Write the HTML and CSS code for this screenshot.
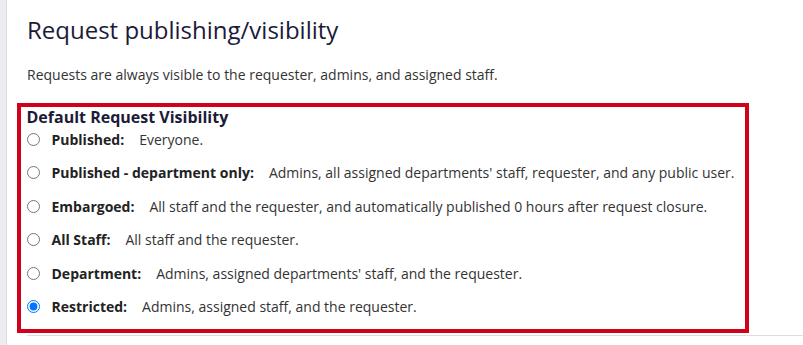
FILE: index.html
```html
<!DOCTYPE html>
<html lang="en">
<head>
  <meta charset="UTF-8" />
  <title>Request publishing/visibility</title>
  <link rel="stylesheet" href="styles.css">
</head>
<body>
  <div class="layout">
    <div class="side-rail"></div>

    <div class="content">
      <h1>Request publishing/visibility</h1>
      <p class="intro">Requests are always visible to the requester, admins, and assigned staff.</p>

      <!-- Default visibility options -->
      <fieldset class="visibility-box">
        <legend>Default Request Visibility</legend>
        <label class="option">
          <input type="radio" name="visibility" value="published" />
          <strong>Published:</strong> <span>Everyone.</span>
        </label>
        <label class="option">
          <input type="radio" name="visibility" value="published_dept" />
          <strong>Published - department only:</strong> <span>Admins, all assigned departments' staff, requester, and any public user.</span>
        </label>
        <label class="option">
          <input type="radio" name="visibility" value="embargoed" />
          <strong>Embargoed:</strong> <span>All staff and the requester, and automatically published 0 hours after request closure.</span>
        </label>
        <label class="option">
          <input type="radio" name="visibility" value="all_staff" />
          <strong>All Staff:</strong> <span>All staff and the requester.</span>
        </label>
        <label class="option">
          <input type="radio" name="visibility" value="department" />
          <strong>Department:</strong> <span>Admins, assigned departments' staff, and the requester.</span>
        </label>
        <label class="option">
          <input type="radio" name="visibility" value="restricted" checked />
          <strong>Restricted:</strong> <span>Admins, assigned staff, and the requester.</span>
        </label>
      </fieldset>

      <div class="divider"></div>
    </div>
  </div>
</body>
</html>
```

FILE: styles.css
```css
body {
  margin: 0;
  font-family: 'Open Sans', 'Liberation Sans', sans-serif;
  color: #333;
  background: #fff;
  overflow: hidden;
}
.layout {
  display: flex;
  height: 345px;
}
.side-rail {
  width: 6px;
  flex-shrink: 0;
  background: #ececf0;
  border-right: 1px solid #dcdce2;
}
.content {
  flex: 1;
  padding: 12px 0 0 10px;
}
h1 {
  margin: 0 0 0 10px;
  font-size: 24px;
  font-weight: 400;
  line-height: 36px;
  color: #1b1b38;
}
.intro {
  margin: 17px 0 0 10px;
  font-size: 14px;
  line-height: 20px;
  color: #333;
}
.visibility-box {
  margin: 18px 0 0 0;
  width: 732px;
  box-sizing: border-box;
  border: 4.5px solid #d0021b;
  padding: 0 0 10px 5.5px;
  min-width: 0;
  display: flex;
  flex-direction: column;
  gap: 9.5px;
}
.visibility-box legend {
  float: left;
  width: 100%;
  padding: 0;
  margin-bottom: -9.5px;
  font-size: 16px;
  font-weight: 700;
  line-height: 20px;
  color: #1b1b38;
}
.option {
  display: flex;
  align-items: center;
  height: 24px;
  font-size: 14px;
  color: #333;
}
.option input {
  margin: 0 12px 0 0;
  width: 13px;
  height: 13px;
}
.option strong {
  font-weight: 700;
  color: #222;
  margin-right: 15px;
}
.divider {
  margin: 2px 0 0 10px;
  border-top: 1px solid #ddd;
}
```
